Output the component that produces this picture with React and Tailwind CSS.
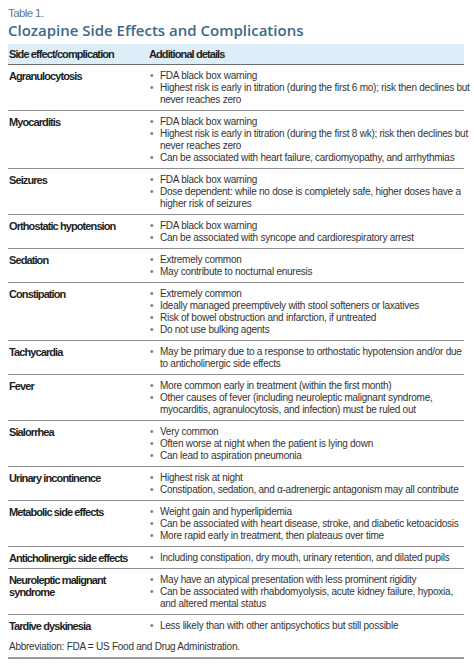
import React from "react";

const rows = [
  {
    name: ["Agranulocytosis"],
    items: [
      ["FDA black box warning"],
      ["Highest risk is early in titration (during the first 6 mo); risk then declines but", "never reaches zero"],
    ],
  },
  {
    name: ["Myocarditis"],
    items: [
      ["FDA black box warning"],
      ["Highest risk is early in titration (during the first 8 wk); risk then declines but", "never reaches zero"],
      ["Can be associated with heart failure, cardiomyopathy, and arrhythmias"],
    ],
  },
  {
    name: ["Seizures"],
    items: [
      ["FDA black box warning"],
      ["Dose dependent: while no dose is completely safe, higher doses have a", "higher risk of seizures"],
    ],
  },
  {
    name: ["Orthostatic hypotension"],
    items: [["FDA black box warning"], ["Can be associated with syncope and cardiorespiratory arrest"]],
  },
  {
    name: ["Sedation"],
    items: [["Extremely common"], ["May contribute to nocturnal enuresis"]],
  },
  {
    name: ["Constipation"],
    items: [
      ["Extremely common"],
      ["Ideally managed preemptively with stool softeners or laxatives"],
      ["Risk of bowel obstruction and infarction, if untreated"],
      ["Do not use bulking agents"],
    ],
  },
  {
    name: ["Tachycardia"],
    items: [["May be primary due to a response to orthostatic hypotension and/or due", "to anticholinergic side effects"]],
  },
  {
    name: ["Fever"],
    items: [
      ["More common early in treatment (within the first month)"],
      ["Other causes of fever (including neuroleptic malignant syndrome,", "myocarditis, agranulocytosis, and infection) must be ruled out"],
    ],
  },
  {
    name: ["Sialorrhea"],
    items: [
      ["Very common"],
      ["Often worse at night when the patient is lying down"],
      ["Can lead to aspiration pneumonia"],
    ],
  },
  {
    name: ["Urinary incontinence"],
    items: [
      ["Highest risk at night"],
      ["Constipation, sedation, and \u03b1-adrenergic antagonism may all contribute"],
    ],
  },
  {
    name: ["Metabolic side effects"],
    items: [
      ["Weight gain and hyperlipidemia"],
      ["Can be associated with heart disease, stroke, and diabetic ketoacidosis"],
      ["More rapid early in treatment, then plateaus over time"],
    ],
  },
  {
    name: ["Anticholinergic side effects"],
    items: [["Including constipation, dry mouth, urinary retention, and dilated pupils"]],
  },
  {
    name: ["Neuroleptic malignant", "syndrome"],
    items: [
      ["May have an atypical presentation with less prominent rigidity"],
      ["Can be associated with rhabdomyolysis, acute kidney failure, hypoxia,", "and altered mental status"],
    ],
  },
  {
    name: ["Tardive dyskinesia"],
    items: [["Less likely than with other antipsychotics but still possible"]],
    last: true,
  },
];

// no condensed face in the sandbox, so tighten Liberation Sans instead
const heading = "font-['Liberation_Sans',Arial,sans-serif] font-bold text-[11px] tracking-[-0.9px]";
const body = "font-['Liberation_Sans',Arial,sans-serif] text-[10px] leading-[12px] tracking-[-0.25px] text-[#333]";

export default function App() {
  return (
    <div className="w-[474px] h-[665px] bg-white pt-[6px] px-[8px] text-[#222]">
      <div className="font-['Liberation_Sans',Arial,sans-serif] text-[11.5px] leading-[14px] tracking-[-0.6px] text-[#5c7c92]">
        Table 1.
      </div>
      <div className="font-['Open_Sans','Liberation_Sans',sans-serif] font-semibold text-[15px] leading-[20px] text-[#3d6888]">
        Clozapine Side Effects and Complications
      </div>

      <div className="w-[456px] mt-[4px]">
        {/* header */}
        <div className={`${heading} flex h-[21px] items-center bg-[#ddeef8] border-b border-[#6e6e6e] text-[#1e1e1e]`}>
          <div className="w-[140px] pl-[1px]">Side effect/complication</div>
          <div className="pl-[1px]">Additional details</div>
        </div>

        {rows.map((row) => (
          <div
            key={row.name[0]}
            className={`flex pt-[5px] pb-[4px] ${row.last ? "" : "border-b border-[#8e8e8e]"}`}
          >
            <div className={`${heading} w-[140px] shrink-0 leading-[12px] pl-[1px] text-[#1e1e1e]`}>
              {row.name.map((n) => (
                <div key={n}>{n}</div>
              ))}
            </div>
            <div className={`flex-1 ${body}`}>
              {row.items.map((lines) => (
                <div key={lines[0]} className="flex">
                  <span className="w-[12px] shrink-0 pl-[2px] text-[#777]">•</span>
                  <div>
                    {lines.map((l) => (
                      <div key={l} className="whitespace-nowrap">{l}</div>
                    ))}
                  </div>
                </div>
              ))}
            </div>
          </div>
        ))}

        <div className={`${body} pl-[1px] pt-[5px] pb-[4px] border-b-2 border-[#9a9a9a]`}>
          Abbreviation: FDA = US Food and Drug Administration.
        </div>
      </div>
    </div>
  );
}
